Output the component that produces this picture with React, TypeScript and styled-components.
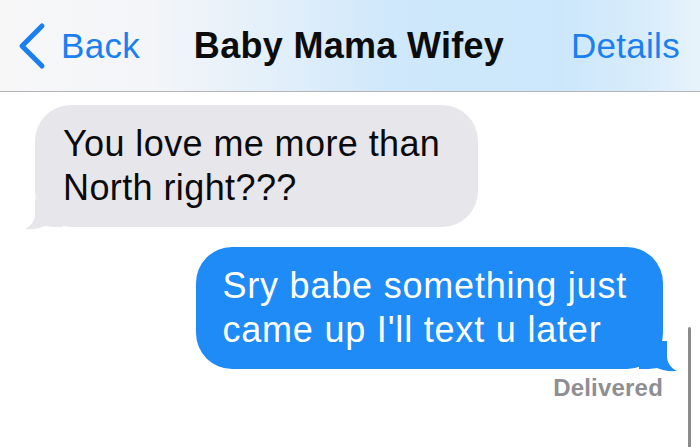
import React from "react";
import styled, { createGlobalStyle } from "styled-components";

const GlobalStyle = createGlobalStyle`
  html, body {
    margin: 0;
    padding: 0;
    background: #ffffff;
    overflow: hidden;
  }
  body {
    font-family: "Liberation Sans", Arial, Helvetica, sans-serif;
    -webkit-font-smoothing: antialiased;
  }
`;

const Screen = styled.div`
  position: relative;
  width: 700px;
  height: 447px;
  overflow: hidden;
  display: flex;
  flex-direction: column;
  background: #ffffff;
`;

const Header = styled.header`
  height: 91px;
  flex: 0 0 auto;
  border-bottom: 1px solid #b2b4b8;
  background: linear-gradient(
    90deg,
    #f7f7f8 0%,
    #f3f5f8 22%,
    #e2effa 40%,
    #cfe8fb 55%,
    #cce7fb 80%,
    #d9edfb 93%,
    #e8f3fb 100%
  );
  display: grid;
  grid-template-columns: 1fr auto 1fr;
  align-items: center;
  padding: 0 20px 0 18px;
`;

const NavButton = styled.div<{ $end?: boolean }>`
  display: flex;
  align-items: center;
  gap: 15px;
  justify-self: ${(p) => (p.$end ? "end" : "start")};
  color: #1a7ff0;
  font-size: 35px;
  letter-spacing: 0.3px;
`;

const Title = styled.div`
  font-size: 36px;
  font-weight: 700;
  color: #0c0c0c;
  letter-spacing: 0.3px;
`;

const Thread = styled.main`
  flex: 1;
  display: flex;
  flex-direction: column;
  padding: 13px 37px 0 35px;
`;

const Bubble = styled.div<{ $out?: boolean }>`
  position: relative;
  align-self: ${(p) => (p.$out ? "flex-end" : "flex-start")};
  margin-top: ${(p) => (p.$out ? "20px" : "0")};
  padding: ${(p) => (p.$out ? "17px 36px 17px 26px" : "17px 38px 17px 28px")};
  border-radius: 36px;
  background: ${(p) => (p.$out ? "#1e8bf6" : "#e6e6eb")};
  color: ${(p) => (p.$out ? "#ffffff" : "#0a0a0a")};
  font-size: 36px;
  line-height: 44px;
  letter-spacing: ${(p) => (p.$out ? "0.8px" : "0.4px")};
  white-space: nowrap;
`;

const Tail = styled.svg<{ $out?: boolean }>`
  position: absolute;
  bottom: -3px;
  width: 40px;
  height: 31px;
  ${(p) => (p.$out ? "right: -14px; transform: scaleX(-1);" : "left: -10px;")}
`;

const Status = styled.div`
  align-self: flex-end;
  margin-top: 5px;
  font-size: 24px;
  font-weight: 700;
  color: #8e8e93;
  letter-spacing: 0.2px;
`;

const ScrollBar = styled.div`
  position: absolute;
  left: 688px;
  top: 327px;
  width: 3px;
  bottom: 0;
  border-radius: 2px 2px 0 0;
  background: #8a8a8c;
`;

const Chevron = () => (
  <svg width="28" height="48" viewBox="0 0 28 48" aria-hidden>
    <path
      d="M24 4 L4 24 L24 44"
      fill="none"
      stroke="#1a7ff0"
      strokeWidth="5"
      strokeLinecap="round"
      strokeLinejoin="round"
    />
  </svg>
);

const BubbleTail = ({ out, color }: { out?: boolean; color: string }) => (
  <Tail $out={out} viewBox="0 0 40 31" aria-hidden>
    <path
      d="M10 0 L10 15 C10 22 6 27 0 30 C8 30.5 15 29.5 20 27 C25 28 31 28 38 28 L38 0 Z"
      fill={color}
    />
  </Tail>
);

export default function App() {
  return (
    <>
      <GlobalStyle />
      <Screen>
        <Header>
          <NavButton>
            <Chevron />
            <span>Back</span>
          </NavButton>
          <Title>Baby Mama Wifey</Title>
          <NavButton $end>Details</NavButton>
        </Header>
        <Thread>
          <Bubble>
            You love me more than
            <br />
            North right???
            <BubbleTail color="#e6e6eb" />
          </Bubble>
          <Bubble $out>
            Sry babe something just
            <br />
            came up I'll text u later
            <BubbleTail out color="#1e8bf6" />
          </Bubble>
          <Status>Delivered</Status>
        </Thread>
        <ScrollBar />
      </Screen>
    </>
  );
}
